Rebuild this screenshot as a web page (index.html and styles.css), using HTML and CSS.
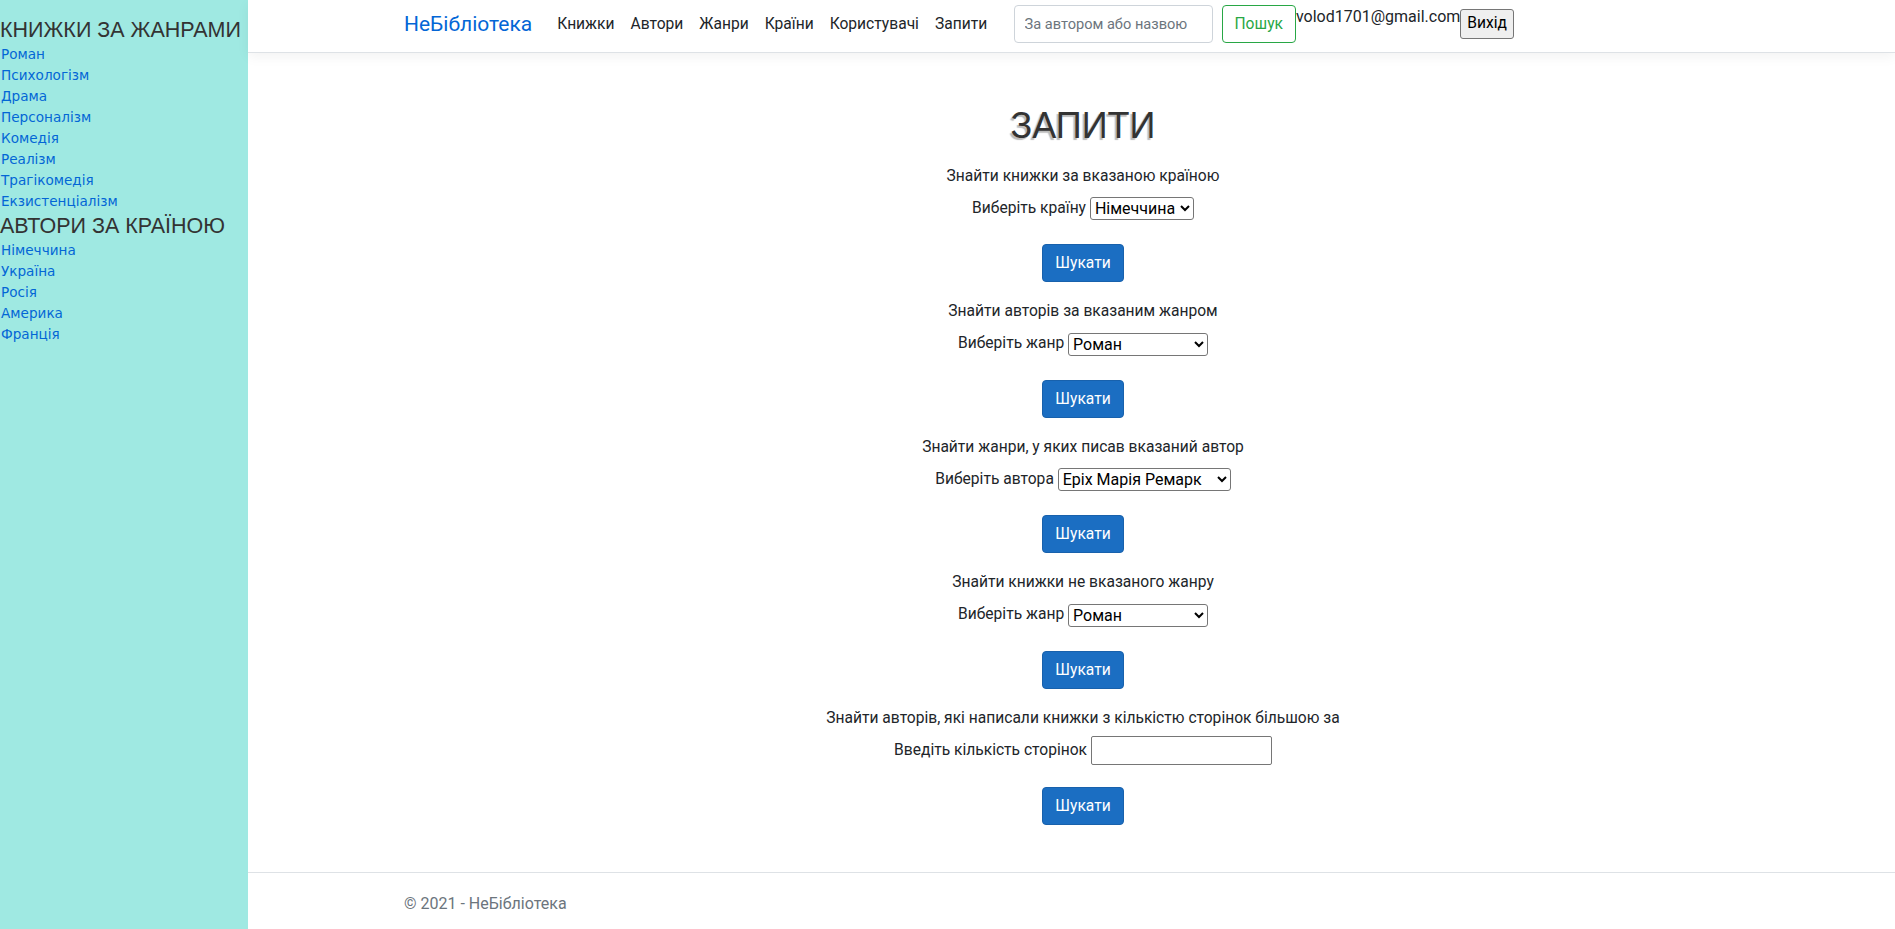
FILE: index.html
```html
<!DOCTYPE html>
<html lang="uk">
  <head>
    <title>Запити - НеБібліотека</title>
    <meta charset="utf-8">
    <meta name="viewport" content="width=device-width">
    <link rel="stylesheet" href="styles.css">
  </head>
<body>
<div class="layout">
  <aside class="sidebar">
    <h3 class="side-title">КНИЖКИ ЗА ЖАНРАМИ</h3>
    <ul class="side-list">
      <li><a href="#">Роман</a></li>
      <li><a href="#">Психологізм</a></li>
      <li><a href="#">Драма</a></li>
      <li><a href="#">Персоналізм</a></li>
      <li><a href="#">Комедія</a></li>
      <li><a href="#">Реалізм</a></li>
      <li><a href="#">Трагікомедія</a></li>
      <li><a href="#">Екзистенціалізм</a></li>
    </ul>
    <h3 class="side-title">АВТОРИ ЗА КРАЇНОЮ</h3>
    <ul class="side-list">
      <li><a href="#">Німеччина</a></li>
      <li><a href="#">Україна</a></li>
      <li><a href="#">Росія</a></li>
      <li><a href="#">Америка</a></li>
      <li><a href="#">Франція</a></li>
    </ul>
  </aside>

  <div class="page">
    <header class="topbar">
      <nav class="container navbar">
        <a class="brand" href="#">НеБібліотека</a>
        <ul class="nav">
          <li><a class="nav-link" href="#">Книжки</a></li>
          <li><a class="nav-link" href="#">Автори</a></li>
          <li><a class="nav-link" href="#">Жанри</a></li>
          <li><a class="nav-link" href="#">Країни</a></li>
          <li><a class="nav-link" href="#">Користувачі</a></li>
          <li><a class="nav-link" href="#">Запити</a></li>
        </ul>
        <form class="search">
          <input class="search-input" type="search" placeholder="За автором або назвою">
          <button class="btn btn-outline-success" type="button">Пошук</button>
        </form>
        <span class="user-email">volod1701@gmail.com</span>
        <button class="logout" type="button">Вихід</button>
      </nav>
    </header>

    <main class="main">
      <h1 class="page-title">ЗАПИТИ</h1>

      <form class="query">
        <p class="query-title">Знайти книжки за вказаною країною</p>
        <p class="query-row">Виберіть країну
          <select class="select select-country">
            <option>Німеччина</option>
            <option>Україна</option>
            <option>Росія</option>
            <option>Америка</option>
            <option>Франція</option>
          </select>
        </p>
        <button class="btn btn-primary" type="button">Шукати</button>
      </form>

      <form class="query">
        <p class="query-title">Знайти авторів за вказаним жанром</p>
        <p class="query-row">Виберіть жанр
          <select class="select select-genre">
            <option>Роман</option>
            <option>Психологізм</option>
            <option>Драма</option>
            <option>Персоналізм</option>
            <option>Комедія</option>
            <option>Реалізм</option>
            <option>Трагікомедія</option>
            <option>Екзистенціалізм</option>
          </select>
        </p>
        <button class="btn btn-primary" type="button">Шукати</button>
      </form>

      <form class="query">
        <p class="query-title">Знайти жанри, у яких писав вказаний автор</p>
        <p class="query-row">Виберіть автора
          <select class="select select-author">
            <option>Еріх Марія Ремарк</option>
            <option>Тарас Шевченко</option>
            <option>Лев Толстой</option>
            <option>Ернест Хемінгуей</option>
          </select>
        </p>
        <button class="btn btn-primary" type="button">Шукати</button>
      </form>

      <form class="query">
        <p class="query-title">Знайти книжки не вказаного жанру</p>
        <p class="query-row">Виберіть жанр
          <select class="select select-genre">
            <option>Роман</option>
            <option>Психологізм</option>
            <option>Драма</option>
            <option>Персоналізм</option>
            <option>Комедія</option>
            <option>Реалізм</option>
            <option>Трагікомедія</option>
            <option>Екзистенціалізм</option>
          </select>
        </p>
        <button class="btn btn-primary" type="button">Шукати</button>
      </form>

      <form class="query">
        <p class="query-title">Знайти авторів, які написали книжки з кількістю сторінок більшою за</p>
        <p class="query-row">Введіть кількість сторінок
          <input class="text-input" type="text">
        </p>
        <button class="btn btn-primary" type="button">Шукати</button>
      </form>
    </main>

    <footer class="footer">
      <div class="container footer-text">&copy; 2021 - НеБібліотека</div>
    </footer>
  </div>
</div>
</body>
</html>
```

FILE: styles.css
```css
* { box-sizing: border-box; }
html, body { margin: 0; padding: 0; }
body { font-family: Roboto, "Noto Sans", sans-serif; font-size: 15.6px; line-height: 1.5; color: #212529; background: #fff; }
a { color: #0366d6; text-decoration: none; }

.layout { display: flex; min-height: 100vh; }

/* sidebar */
.sidebar { flex: 0 0 248px; width: 248px; background: #9fe9e2; padding-top: 16px; }
.side-title { margin: 0; font-family: "Liberation Sans", Arial, sans-serif; font-weight: normal; font-size: 21.5px; line-height: 28px; color: #333; }
.side-list { list-style: none; margin: 0; padding: 0; }
.side-list li { font-family: "DejaVu Sans", Verdana, sans-serif; font-size: 13.6px; line-height: 21px; padding-left: 1px; }
.side-list a { color: #0366d6; }

.page { flex: 1; display: flex; flex-direction: column; min-width: 0; }

.container { width: 1140px; margin-left: 141px; padding: 0 15px; }

/* header */
.topbar { background: #fff; border-bottom: 1px solid #dee2e6; box-shadow: 0 .25rem .75rem rgba(0, 0, 0, .05); padding-bottom: 4px; }
.navbar { display: flex; align-items: center; height: 48px; }
.brand { font-size: 21px; line-height: 30px; color: #0366d6; margin-right: 17px; }
.nav { display: flex; flex: 1; list-style: none; margin: 0; padding: 0; }
.nav-link { display: block; padding: 2px 8px 0; color: #212529; }
.search { display: flex; align-items: center; margin: 0; }
.search-input { width: 199px; height: 38px; padding: 6px 5px 6px 10px; font: inherit; font-size: 14.6px; color: #495057; border: 1px solid #ced4da; border-radius: 4px; margin-right: 9px; }
.search-input::placeholder { color: #6c757d; }
.user-email { align-self: flex-start; margin-top: 5px; font-size: 16px; line-height: 24px; color: #212529; }
.logout { align-self: flex-start; margin-top: 9px; height: 30px; padding: 1px 6px; font: inherit; color: #000; background: #efefef; border: 1px solid #767676; border-radius: 3px; }

.btn { display: inline-block; height: 38px; padding: 6px 12px; font: inherit; line-height: 24px; border: 1px solid transparent; border-radius: 4px; background: transparent; cursor: pointer; }
.btn-outline-success { color: #28a745; border-color: #28a745; }
.btn-primary { color: #fff; background: #1b6ec2; border-color: #1861ac; }

/* queries */
.main { flex: 1; padding: 50px 0 0 23px; text-align: center; }
.page-title { margin: 0 0 15px; font-family: "Liberation Sans", Arial, sans-serif; font-weight: normal; font-size: 36px; line-height: 46px; color: #333; text-shadow: -2px 2px 1px #bbb; }
.query { display: flex; flex-direction: column; align-items: center; margin: 0 0 17px; }
.query-title { margin: 0 0 8px; line-height: 24px; }
.query-row { margin: 0 0 24px; line-height: 24px; }
.select { height: 23px; font: inherit; font-size: 16px; line-height: normal; color: #000; background: #fff; border: 1px solid #767676; border-radius: 3px; vertical-align: middle; }
.select-country { width: 104px; }
.select-genre { width: 140px; }
.select-author { width: 173px; }
.text-input { width: 181px; height: 29px; margin: -2px 0; padding: 1px 2px; font: inherit; border: 1px solid #767676; border-radius: 2px; vertical-align: middle; }

/* footer */
.footer { border-top: 1px solid #dee2e6; color: #6c757d; font-size: 16px; }
.footer-text { height: 56px; padding-top: 19px; line-height: 24px; white-space: nowrap; }
```
